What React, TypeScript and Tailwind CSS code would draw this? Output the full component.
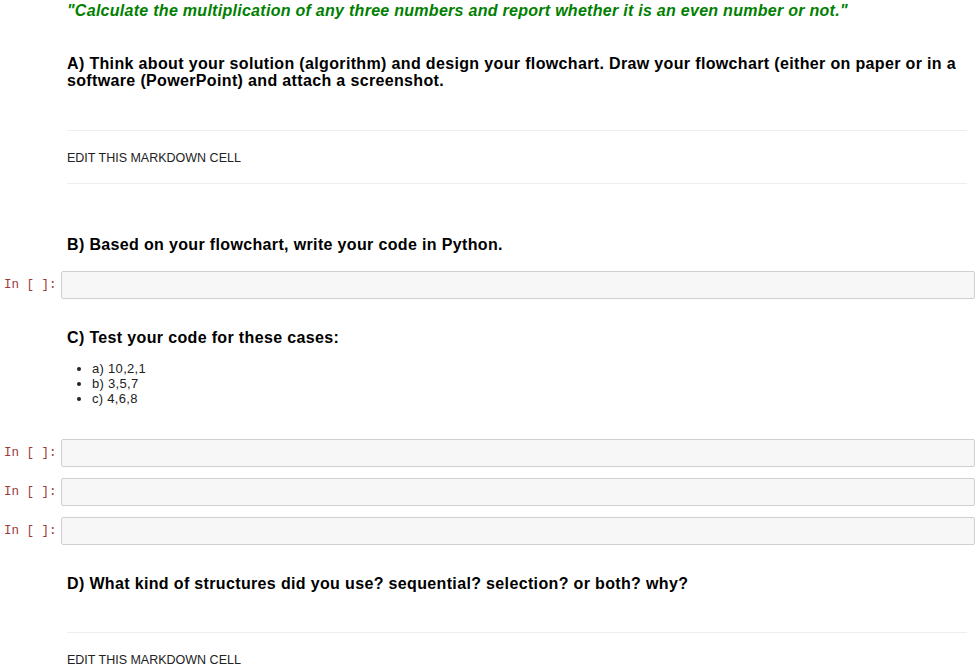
import React from "react";

const SANS = "font-['Liberation_Sans',Arial,sans-serif]";
const MONO = "font-['Liberation_Mono','DejaVu_Sans_Mono',monospace]";

const Heading: React.FC<{ className?: string; children: React.ReactNode }> = ({ className = "", children }) => (
  <div className={`pl-[67px] pr-[12px] text-[16px] leading-[17px] font-bold tracking-[0.35px] text-black ${className}`}>
    {children}
  </div>
);

const CodeCell: React.FC<{ className?: string }> = ({ className = "" }) => (
  <div className={`flex items-center pr-[4px] ${className}`}>
    <div className={`w-[61px] shrink-0 pl-[4px] text-[12.5px] text-[#9a3a3a] ${MONO}`}>In [ ]:</div>
    <div className="h-[28px] flex-1 rounded-[2px] border border-[#cfcfcf] bg-[#f7f7f7]" />
  </div>
);

const EditCell: React.FC<{ className?: string; bottomRule?: boolean }> = ({ className = "", bottomRule = true }) => (
  <div className={`pl-[67px] pr-[12px] ${className}`}>
    <hr className="border-0 border-t border-[#eeeeee]" />
    <div className="mt-[20px] text-[12.5px] leading-[15px] text-[#222]">EDIT THIS MARKDOWN CELL</div>
    {bottomRule && <hr className="mt-[17px] border-0 border-t border-[#eeeeee]" />}
  </div>
);

export default function App() {
  return (
    <div className={`h-[668px] w-[979px] overflow-hidden bg-white pt-[2px] ${SANS}`}>
      <div className="pl-[67px] text-[16px] leading-[18px] font-bold italic tracking-[0.28px] text-[#008000]">
        "Calculate the multiplication of any three numbers and report whether it is an even number or not."
      </div>

      <Heading className="mt-[35px]">
        A) Think about your solution (algorithm) and design your flowchart. Draw your flowchart (either on paper or in a
        software (PowerPoint) and attach a screenshot.
      </Heading>

      <EditCell className="mt-[41px]" />

      <Heading className="mt-[52px]">B) Based on your flowchart, write your code in Python.</Heading>

      <CodeCell className="mt-[18px]" />

      <Heading className="mt-[30px]">C) Test your code for these cases:</Heading>

      <ul className="mt-[15px] list-disc pl-[92px] text-[13px] leading-[15px] tracking-[0.3px] text-[#222]">
        <li>a) 10,2,1</li>
        <li>b) 3,5,7</li>
        <li>c) 4,6,8</li>
      </ul>

      <div className="mt-[33px] flex flex-col gap-[11px]">
        <CodeCell />
        <CodeCell />
        <CodeCell />
      </div>

      <Heading className="mt-[30px]">D) What kind of structures did you use? sequential? selection? or both? why?</Heading>

      <EditCell className="mt-[40px]" bottomRule={false} />
    </div>
  );
}
